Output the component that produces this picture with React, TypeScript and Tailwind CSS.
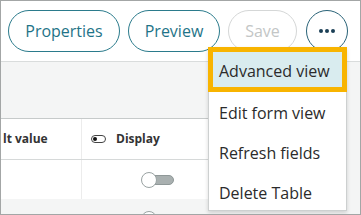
const font = { fontFamily: '"Open Sans", "Noto Sans", sans-serif' };

const Toggle = () => (
  <div className="relative h-[16px] w-[33px]">
    <div className="absolute left-[8px] top-[3px] h-[10px] w-[25px] rounded-full border border-[#8f9898] bg-[#a9b0b0]" />
    <div className="absolute left-0 top-0 h-[16px] w-[16px] rounded-full border border-[#9aa3a3] bg-white" />
  </div>
);

const menuItems = ["Edit form view", "Refresh fields", "Delete Table"];

export default function App() {
  return (
    <div
      className="relative h-[215px] w-[361px] overflow-hidden border border-[#a3a6a6] bg-[#f4f5f5]"
      style={font}
    >
      {/* toolbar */}
      <div className="flex h-[61px] items-start gap-[8px] border-b border-[#d9dcdc] bg-white pl-[7px] pt-[9px]">
        <button className="flex h-[42px] w-[112px] items-center justify-center rounded-full border border-[#2b7b8c] text-[16px] text-[#1f7488]">
          Properties
        </button>
        <button className="flex h-[42px] w-[92px] items-center justify-center rounded-full border border-[#2b7b8c] text-[16px] text-[#1f7488]">
          Preview
        </button>
        <button className="flex h-[42px] w-[69px] items-center justify-center rounded-full border border-[#d5d7d7] text-[16px] text-[#c3c6c6]">
          Save
        </button>
        <button className="ml-px flex h-[42px] w-[42px] items-center justify-center gap-[2px] rounded-full border border-[#2a6378]">
          <span className="h-[4px] w-[4px] rounded-full bg-[#1b3f56]" />
          <span className="h-[4px] w-[4px] rounded-full bg-[#1b3f56]" />
          <span className="h-[4px] w-[4px] rounded-full bg-[#1b3f56]" />
        </button>
      </div>

      {/* table */}
      <div className="w-[346px]">
        <div className="h-[56px]" />
        <div className="flex h-[42px] border-y border-t-[#c6caca] border-b-[#d6d9d9] bg-white">
          <div className="flex w-[81px] items-center border-r border-[#ececec] pl-[2px] text-[12px] font-bold text-[#333]">
            lt value
          </div>
          <div className="flex items-center pl-[9px] text-[12px] font-bold text-[#333]">
            <span className="relative mr-[10px] h-[8px] w-[15px] rounded-full border border-[#444]">
              <span className="absolute left-[1px] top-[1px] h-[4px] w-[4px] rounded-full bg-[#111]" />
            </span>
            Display
          </div>
        </div>
        <div className="flex h-[39px] bg-white">
          <div className="w-[81px] border-r border-[#ececec]" />
          <div className="flex items-center pl-[59px]">
            <Toggle />
          </div>
        </div>
        <div className="flex h-[40px] bg-[#f4f5f5]">
          <div className="w-[81px]" />
          <div className="flex items-center pl-[59px]">
            <Toggle />
          </div>
        </div>
      </div>

      {/* dropdown menu */}
      <div className="absolute left-[207px] top-[46px] flex h-[164px] w-[139px] flex-col border border-[#cdd0d0] bg-white text-[16px] text-[#2b2b2b] shadow-[0_2px_4px_rgba(0,0,0,0.15)]">
        <div className="-mx-px -mt-px flex h-[45px] shrink-0 items-center border-[5px] border-[#f8b400] bg-[#d9ecef] pl-[6px] pt-[2px]">
          Advanced view
        </div>
        {menuItems.map((item) => (
          <div key={item} className="flex h-[40px] shrink-0 items-center pl-[10px] pt-[1px]">
            {item}
          </div>
        ))}
      </div>
    </div>
  );
}
